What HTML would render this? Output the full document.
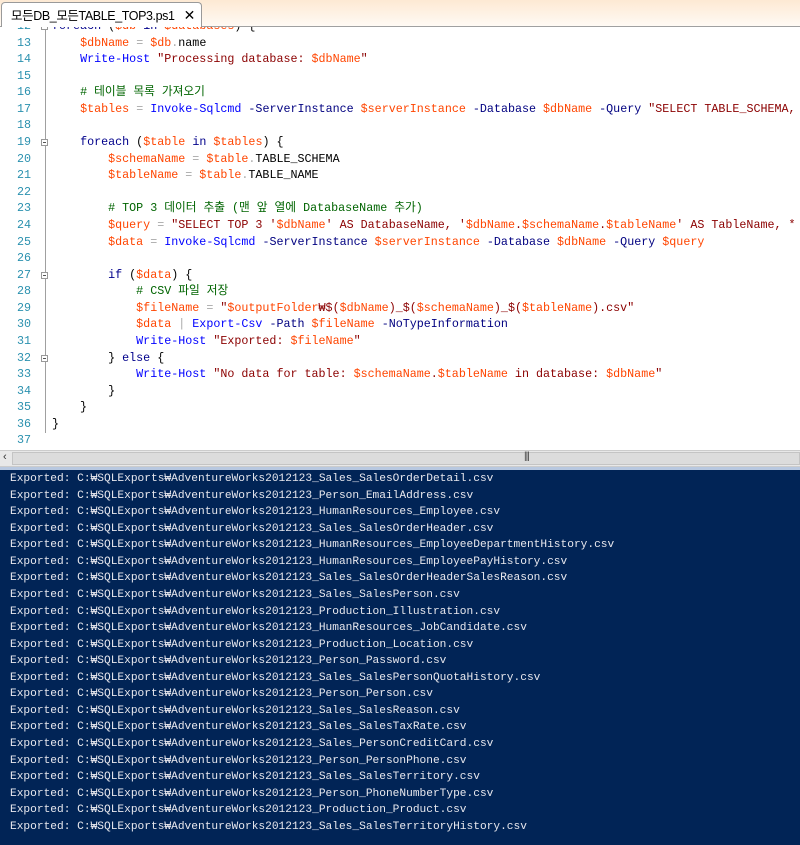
<!DOCTYPE html>
<html><head><meta charset="utf-8"><style>
body{margin:0;width:800px;height:845px;overflow:hidden;background:#fff;position:relative;font-family:"Liberation Sans","Noto Sans CJK KR",sans-serif}
#tabbar{position:absolute;left:0;top:0;width:800px;height:26px;background:linear-gradient(#fde9d3,#fffaf4);border-bottom:1px solid #a0a0a0;z-index:3}
#tab{position:absolute;left:1px;top:2px;width:201px;height:25px;background:#fff;border:1px solid #9a9a9a;border-bottom:none;border-radius:4px 4px 0 0;font-size:12.5px;line-height:25px;padding-left:9px;box-sizing:border-box;color:#000;white-space:nowrap;overflow:hidden;letter-spacing:-0.4px}
#tab span{margin-left:9px;font-size:14px}
#code{position:absolute;left:0;top:18px;width:800px;height:432px;overflow:hidden}
pre{margin:0;font-family:"Liberation Mono","Noto Sans CJK KR",monospace;font-size:11.7px;line-height:16.58px;white-space:pre}
#nums{position:absolute;left:0;top:0;width:31px;text-align:right;color:#2b91af}
#src{position:absolute;left:52px;top:0;color:#000}
#fold{position:absolute;left:45px;top:10px;width:1px;height:405px;background:#a0a0a0}
.fb{position:absolute;left:41px;width:7px;height:7px;border:1px solid #999;background:#fff;box-sizing:border-box}
.fb::after{content:"";position:absolute;left:1px;top:2px;width:3px;height:1px;background:#555}
.v{color:#ff4500}.c{color:#0000ff}.s{color:#8b0000}.m{color:#006400}.k{color:#00008b}.o{color:#a9a9a9}.p{color:#000080}
#hs{position:absolute;left:0;top:450px;width:800px;height:17px;background:#e8e8e8;border-top:1px solid #ccc;border-bottom:1px solid #ccc;box-sizing:border-box}
#hs .l{position:absolute;left:3px;top:0;font-size:11px;color:#333}
#hs .thumb{position:absolute;left:12px;top:1px;width:788px;height:13px;background:#dcdcdc;border:1px solid #c4c4c4;box-sizing:border-box}
#hs .g{position:absolute;left:524px;top:0;font-size:10px;color:#444;letter-spacing:-1px}
#con{position:absolute;left:0;top:467px;width:800px;height:378px;background:#012456;border-top:3px solid #b8c8e0;box-sizing:border-box;overflow:hidden}
#con pre{position:absolute;left:10px;top:1px;font-size:11.2px;line-height:16.57px;color:#e8e8ee}
</style></head><body>
<div id="tabbar"><div id="tab">모든DB_모든TABLE_TOP3.ps1<span>✕</span></div></div>
<div id="code">
<div id="fold"></div>
<div class="fb" style="top:5px"></div>
<div class="fb" style="top:121px"></div>
<div class="fb" style="top:254px"></div>
<div class="fb" style="top:337px"></div>
<pre id="nums">12
13
14
15
16
17
18
19
20
21
22
23
24
25
26
27
28
29
30
31
32
33
34
35
36
37</pre>
<pre id="src"><span class="k">foreach</span> (<span class="v">$db</span> <span class="k">in</span> <span class="v">$databases</span>) {
    <span class="v">$dbName</span> <span class="o">=</span> <span class="v">$db</span><span class="o">.</span>name
    <span class="c">Write-Host</span> <span class="s">"Processing database: </span><span class="v">$dbName</span><span class="s">"</span>

    <span class="m"># 테이블 목록 가져오기</span>
    <span class="v">$tables</span> <span class="o">=</span> <span class="c">Invoke-Sqlcmd</span> <span class="p">-ServerInstance</span> <span class="v">$serverInstance</span> <span class="p">-Database</span> <span class="v">$dbName</span> <span class="p">-Query</span> <span class="s">"SELECT TABLE_SCHEMA, TABLE_NAME FROM INFORMATION_SCHEMA.TABLES"</span>

    <span class="k">foreach</span> (<span class="v">$table</span> <span class="k">in</span> <span class="v">$tables</span>) {
        <span class="v">$schemaName</span> <span class="o">=</span> <span class="v">$table</span><span class="o">.</span>TABLE_SCHEMA
        <span class="v">$tableName</span> <span class="o">=</span> <span class="v">$table</span><span class="o">.</span>TABLE_NAME

        <span class="m"># TOP 3 데이터 추출 (맨 앞 열에 DatabaseName 추가)</span>
        <span class="v">$query</span> <span class="o">=</span> <span class="s">"SELECT TOP 3 '</span><span class="v">$dbName</span><span class="s">' AS DatabaseName, '</span><span class="v">$dbName</span><span class="s">.</span><span class="v">$schemaName</span><span class="s">.</span><span class="v">$tableName</span><span class="s">' AS TableName, * FROM </span>
        <span class="v">$data</span> <span class="o">=</span> <span class="c">Invoke-Sqlcmd</span> <span class="p">-ServerInstance</span> <span class="v">$serverInstance</span> <span class="p">-Database</span> <span class="v">$dbName</span> <span class="p">-Query</span> <span class="v">$query</span>

        <span class="k">if</span> (<span class="v">$data</span>) {
            <span class="m"># CSV 파일 저장</span>
            <span class="v">$fileName</span> <span class="o">=</span> <span class="s">"</span><span class="v">$outputFolder</span><span class="s">₩$(</span><span class="v">$dbName</span><span class="s">)_$(</span><span class="v">$schemaName</span><span class="s">)_$(</span><span class="v">$tableName</span><span class="s">).csv"</span>
            <span class="v">$data</span> <span class="o">|</span> <span class="c">Export-Csv</span> <span class="p">-Path</span> <span class="v">$fileName</span> <span class="p">-NoTypeInformation</span>
            <span class="c">Write-Host</span> <span class="s">"Exported: </span><span class="v">$fileName</span><span class="s">"</span>
        } <span class="k">else</span> {
            <span class="c">Write-Host</span> <span class="s">"No data for table: </span><span class="v">$schemaName</span><span class="s">.</span><span class="v">$tableName</span><span class="s"> in database: </span><span class="v">$dbName</span><span class="s">"</span>
        }
    }
}
</pre>
</div>
<div id="hs"><span class="l">‹</span><div class="thumb"></div><span class="g">|||</span></div>
<div id="con"><pre>Exported: C:₩SQLExports₩AdventureWorks2012123_Sales_SalesOrderDetail.csv
Exported: C:₩SQLExports₩AdventureWorks2012123_Person_EmailAddress.csv
Exported: C:₩SQLExports₩AdventureWorks2012123_HumanResources_Employee.csv
Exported: C:₩SQLExports₩AdventureWorks2012123_Sales_SalesOrderHeader.csv
Exported: C:₩SQLExports₩AdventureWorks2012123_HumanResources_EmployeeDepartmentHistory.csv
Exported: C:₩SQLExports₩AdventureWorks2012123_HumanResources_EmployeePayHistory.csv
Exported: C:₩SQLExports₩AdventureWorks2012123_Sales_SalesOrderHeaderSalesReason.csv
Exported: C:₩SQLExports₩AdventureWorks2012123_Sales_SalesPerson.csv
Exported: C:₩SQLExports₩AdventureWorks2012123_Production_Illustration.csv
Exported: C:₩SQLExports₩AdventureWorks2012123_HumanResources_JobCandidate.csv
Exported: C:₩SQLExports₩AdventureWorks2012123_Production_Location.csv
Exported: C:₩SQLExports₩AdventureWorks2012123_Person_Password.csv
Exported: C:₩SQLExports₩AdventureWorks2012123_Sales_SalesPersonQuotaHistory.csv
Exported: C:₩SQLExports₩AdventureWorks2012123_Person_Person.csv
Exported: C:₩SQLExports₩AdventureWorks2012123_Sales_SalesReason.csv
Exported: C:₩SQLExports₩AdventureWorks2012123_Sales_SalesTaxRate.csv
Exported: C:₩SQLExports₩AdventureWorks2012123_Sales_PersonCreditCard.csv
Exported: C:₩SQLExports₩AdventureWorks2012123_Person_PersonPhone.csv
Exported: C:₩SQLExports₩AdventureWorks2012123_Sales_SalesTerritory.csv
Exported: C:₩SQLExports₩AdventureWorks2012123_Person_PhoneNumberType.csv
Exported: C:₩SQLExports₩AdventureWorks2012123_Production_Product.csv
Exported: C:₩SQLExports₩AdventureWorks2012123_Sales_SalesTerritoryHistory.csv</pre></div>
</body></html>
